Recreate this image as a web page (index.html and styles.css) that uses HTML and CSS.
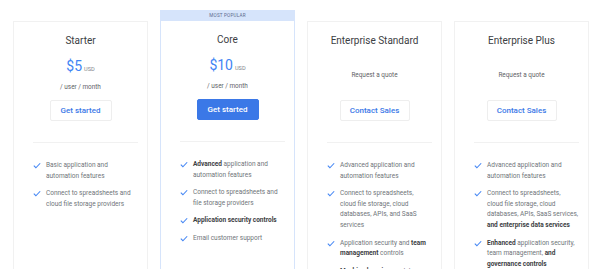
FILE: index.html
```html
<!DOCTYPE html>
<html lang="en">
<head>
    <meta charset="UTF-8">
    <meta name="viewport" content="width=device-width, initial-scale=1.0">
    <title>Pricing</title>
    <link rel="stylesheet" href="styles.css">
</head>
<body>
    <!-- pricing plans -->
    <div class="plans">
        <!-- Starter -->
        <div class="plan">
            <div class="plan-head">
                <div class="plan-name">Starter</div>
                <div class="pricing">
                    <div class="price">$5<span class="currency">USD</span></div>
                    <div class="per">/ user / month</div>
                </div>
                <a class="btn">Get started</a>
            </div>
            <div class="plan-body">
                <ul class="features">
                    <li><svg class="check" viewBox="0 0 10 8"><path d="M1 4.2l2.6 2.6L9 1.2"/></svg><span>Basic application and automation features</span></li>
                    <li><svg class="check" viewBox="0 0 10 8"><path d="M1 4.2l2.6 2.6L9 1.2"/></svg><span>Connect to spreadsheets and cloud file storage providers</span></li>
                </ul>
            </div>
        </div>

        <!-- Core -->
        <div class="plan popular">
            <div class="badge">MOST POPULAR</div>
            <div class="plan-head">
                <div class="plan-name">Core</div>
                <div class="pricing">
                    <div class="price">$10<span class="currency">USD</span></div>
                    <div class="per">/ user / month</div>
                </div>
                <a class="btn btn-primary">Get started</a>
            </div>
            <div class="plan-body">
                <ul class="features">
                    <li><svg class="check" viewBox="0 0 10 8"><path d="M1 4.2l2.6 2.6L9 1.2"/></svg><span><b>Advanced</b> application and automation features</span></li>
                    <li><svg class="check" viewBox="0 0 10 8"><path d="M1 4.2l2.6 2.6L9 1.2"/></svg><span>Connect to spreadsheets and file storage providers</span></li>
                    <li><svg class="check" viewBox="0 0 10 8"><path d="M1 4.2l2.6 2.6L9 1.2"/></svg><span><b>Application security controls</b></span></li>
                    <li><svg class="check" viewBox="0 0 10 8"><path d="M1 4.2l2.6 2.6L9 1.2"/></svg><span>Email customer support</span></li>
                </ul>
            </div>
        </div>

        <!-- Enterprise Standard -->
        <div class="plan">
            <div class="plan-head">
                <div class="plan-name">Enterprise Standard</div>
                <div class="pricing">
                    <div class="quote">Request a quote</div>
                </div>
                <a class="btn btn-wide">Contact Sales</a>
            </div>
            <div class="plan-body">
                <ul class="features">
                    <li><svg class="check" viewBox="0 0 10 8"><path d="M1 4.2l2.6 2.6L9 1.2"/></svg><span>Advanced application and automation features</span></li>
                    <li><svg class="check" viewBox="0 0 10 8"><path d="M1 4.2l2.6 2.6L9 1.2"/></svg><span>Connect to spreadsheets,<br>cloud file storage, cloud databases, APIs, and SaaS services</span></li>
                    <li><svg class="check" viewBox="0 0 10 8"><path d="M1 4.2l2.6 2.6L9 1.2"/></svg><span>Application security and <b>team management</b> controls</span></li>
                    <li><svg class="check" viewBox="0 0 10 8"><path d="M1 4.2l2.6 2.6L9 1.2"/></svg><span><b>Machine learning</b> model integration</span></li>
                </ul>
            </div>
        </div>

        <!-- Enterprise Plus -->
        <div class="plan">
            <div class="plan-head">
                <div class="plan-name">Enterprise Plus</div>
                <div class="pricing">
                    <div class="quote">Request a quote</div>
                </div>
                <a class="btn btn-wide">Contact Sales</a>
            </div>
            <div class="plan-body">
                <ul class="features">
                    <li><svg class="check" viewBox="0 0 10 8"><path d="M1 4.2l2.6 2.6L9 1.2"/></svg><span>Advanced application and automation features</span></li>
                    <li><svg class="check" viewBox="0 0 10 8"><path d="M1 4.2l2.6 2.6L9 1.2"/></svg><span>Connect to spreadsheets,<br>cloud file storage, cloud databases, APIs, SaaS services, <b>and enterprise data services</b></span></li>
                    <li><svg class="check" viewBox="0 0 10 8"><path d="M1 4.2l2.6 2.6L9 1.2"/></svg><span><b>Enhanced</b> application security, team management, <b>and governance controls</b></span></li>
                </ul>
            </div>
        </div>
    </div>
</body>
</html>
```

FILE: styles.css
```css
/* reset */
* {
    margin: 0;
    padding: 0;
    box-sizing: border-box;
}

body {
    background-color: #ffffff;
    font-family: Roboto, "Liberation Sans", sans-serif;
    color: #3c4043;
    overflow: hidden;
}

/* plan row */
.plans {
    display: flex;
    align-items: flex-start;
    gap: 12px;
    padding: 10px 0 0 13px;
}

.plan {
    width: 135px;
    min-height: 300px;
    margin-top: 11px;
    border: 1px solid #f1f1f1;
    background-color: #ffffff;
}

.plan.popular {
    margin-top: 0;
    border-color: #d6e4fb;
}

.badge {
    height: 11px;
    margin: -1px -1px 0;
    background-color: #d6e4fb;
    color: #5b6a8c;
    font-size: 4.6px;
    line-height: 11px;
    letter-spacing: 0.2px;
    text-align: center;
}

/* head: name, price, button */
.plan-head {
    display: flex;
    flex-direction: column;
    align-items: center;
    padding-top: 12px;
}

.plan-name {
    font-size: 10px;
    line-height: 14px;
    color: #3c4043;
}

.pricing {
    height: 42px;
    display: flex;
    flex-direction: column;
    align-items: center;
}

.price {
    margin-top: 9px;
    font-size: 14px;
    line-height: 18px;
    color: #4285f4;
}

.currency {
    margin-left: 2px;
    font-size: 5.6px;
    color: #80868b;
}

.per {
    margin-top: 5px;
    font-size: 6.4px;
    line-height: 9px;
    color: #5f6368;
}

.quote {
    margin-top: 23px;
    font-size: 6.4px;
    line-height: 9px;
    color: #5f6368;
}

.btn {
    margin-top: 10px;
    width: 62px;
    height: 21px;
    display: flex;
    align-items: center;
    justify-content: center;
    border: 1px solid #eeeeee;
    border-radius: 2px;
    font-size: 8px;
    font-weight: 500;
    color: #3b78e7;
    cursor: pointer;
}

.btn-wide {
    width: 70px;
}

.btn-primary {
    background-color: #3b78e7;
    border-color: #3b78e7;
    color: #ffffff;
}

/* feature list */
.plan-body {
    padding: 0 9px 0 19px;
}

.plan-body::before {
    content: "";
    display: block;
    height: 1px;
    margin-top: 21px;
    background-color: #f1f1f1;
}

.features {
    list-style: none;
    display: flex;
    flex-direction: column;
    gap: 7px;
    margin-top: 17px;
}

.features li {
    display: flex;
    gap: 5px;
    font-size: 6.5px;
    line-height: 10.6px;
    color: #70757a;
}

.features b {
    font-weight: 700;
    color: #3c4043;
}

.check {
    flex: none;
    width: 8px;
    height: 7px;
    margin-top: 2px;
    fill: none;
    stroke: #4285f4;
    stroke-width: 1.3;
}
```
